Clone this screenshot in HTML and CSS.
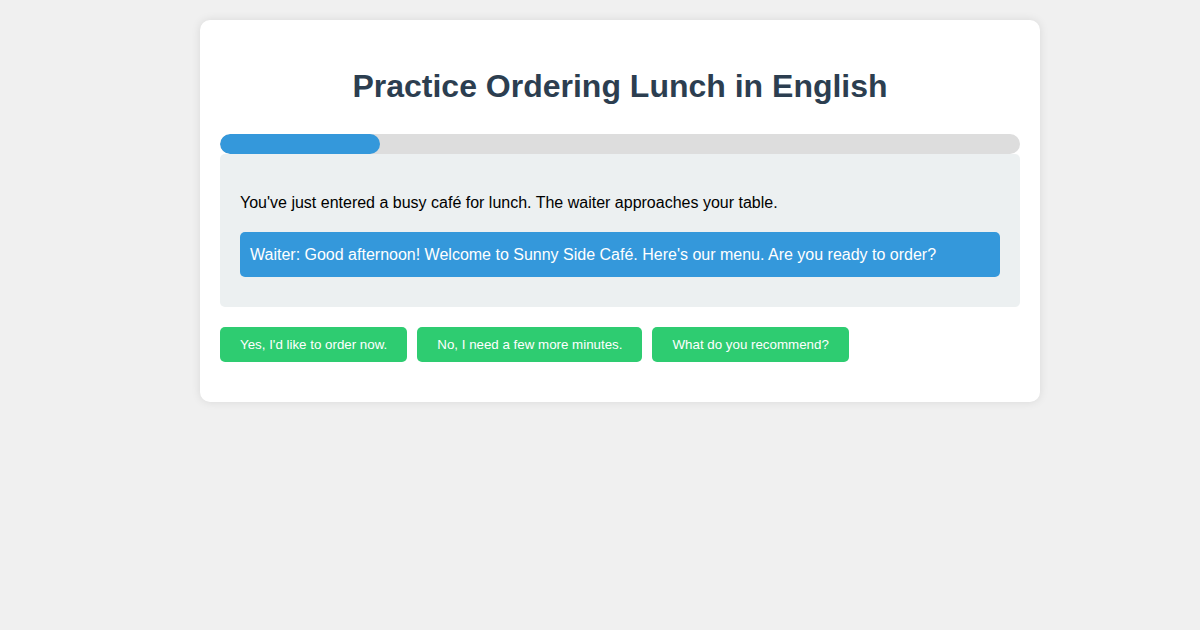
FILE: index.html
```html
<!DOCTYPE html>
<html lang="en">
<head>
<meta charset="utf-8">
<title>Practice Ordering Lunch in English</title>
<link rel="stylesheet" href="styles.css">
</head>
<body>
  <main class="card">
    <h1 class="title">Practice Ordering Lunch in English</h1>
    <div class="progress">
      <div class="progress-fill" style="width: 20%"></div>
    </div>
    <section class="scene">
      <p class="scene-text">You've just entered a busy café for lunch. The waiter approaches your table.</p>
      <div class="bubble">Waiter: Good afternoon! Welcome to Sunny Side Café. Here's our menu. Are you ready to order?</div>
    </section>
    <div class="choices">
      <button class="choice">Yes, I'd like to order now.</button>
      <button class="choice">No, I need a few more minutes.</button>
      <button class="choice">What do you recommend?</button>
    </div>
  </main>
</body>
</html>
```

FILE: styles.css
```css
body {
  margin: 0;
  padding: 20px 0 20px 40px;
  background: #f0f0f0;
  font-family: "Liberation Sans", Arial, sans-serif;
  line-height: 1.6;
  color: #000;
}

.card {
  max-width: 800px;
  margin: 0 auto;
  padding: 20px;
  background: #fff;
  border-radius: 10px;
  box-shadow: 0 0 10px rgba(0, 0, 0, 0.1);
}

.title {
  margin: 0.67em 0;
  font-size: 32px;
  text-align: center;
  color: #2c3e50;
}

.progress {
  height: 20px;
  background: #ddd;
  border-radius: 10px;
  overflow: hidden;
}

.progress-fill {
  height: 100%;
  background: #3498db;
  border-radius: 10px;
}

.scene {
  padding: 20px;
  background: #ecf0f1;
  border-radius: 5px;
}

.scene-text {
  margin: 16px 0;
  font-size: 16px;
}

.bubble {
  margin-bottom: 10px;
  padding: 10px;
  background: #3498db;
  color: #fff;
  border-radius: 5px;
  font-size: 16px;
}

.choices {
  display: flex;
  gap: 10px;
  margin: 20px 0;
}

.choice {
  padding: 10px 20px;
  border: none;
  border-radius: 5px;
  background: #2ecc71;
  color: #fff;
  font-family: "Liberation Sans", Arial, sans-serif;
  font-size: 13.33px;
  line-height: normal;
  cursor: pointer;
}
```
